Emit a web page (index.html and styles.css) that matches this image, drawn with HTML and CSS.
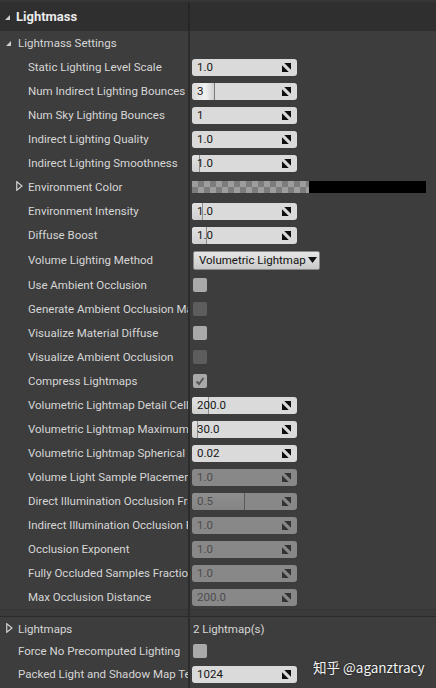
FILE: index.html
```html
<!DOCTYPE html>
<html>
<head>
<meta charset="utf-8">
<link rel="stylesheet" href="styles.css">
</head>
<body>
<div class="panel">
  <div class="row cat">
    <div class="lbl l0"><span class="tri-open"></span>Lightmass</div>
    <div class="val"></div>
  </div>

  <div class="row">
    <div class="lbl l1"><span class="tri-open small"></span>Lightmass Settings</div>
    <div class="val"></div>
  </div>

  <div class="row"><div class="lbl">Static Lighting Level Scale</div><div class="val"><div class="num"><span class="t">1.0</span><svg class="spin" viewBox="0 0 10 10"><polygon points="2.5,0 10,0 10,7.5"/><polygon points="0,2.5 7.5,10 0,10"/></svg></div></div></div>
  <div class="row"><div class="lbl">Num Indirect Lighting Bounces</div><div class="val"><div class="num"><div class="fill knob" style="width:22px"></div><span class="t">3</span><svg class="spin" viewBox="0 0 10 10"><polygon points="2.5,0 10,0 10,7.5"/><polygon points="0,2.5 7.5,10 0,10"/></svg></div></div></div>
  <div class="row"><div class="lbl">Num Sky Lighting Bounces</div><div class="val"><div class="num"><span class="t">1</span><svg class="spin" viewBox="0 0 10 10"><polygon points="2.5,0 10,0 10,7.5"/><polygon points="0,2.5 7.5,10 0,10"/></svg></div></div></div>
  <div class="row"><div class="lbl">Indirect Lighting Quality</div><div class="val"><div class="num"><span class="t">1.0</span><svg class="spin" viewBox="0 0 10 10"><polygon points="2.5,0 10,0 10,7.5"/><polygon points="0,2.5 7.5,10 0,10"/></svg></div></div></div>
  <div class="row"><div class="lbl">Indirect Lighting Smoothness</div><div class="val"><div class="num"><div class="fill" style="width:7px"></div><span class="t">1.0</span><svg class="spin" viewBox="0 0 10 10"><polygon points="2.5,0 10,0 10,7.5"/><polygon points="0,2.5 7.5,10 0,10"/></svg></div></div></div>
  <div class="row"><div class="lbl l-tri"><svg class="tri-closed" viewBox="0 0 7 10"><polygon points="0.75,0.75 6,5 0.75,9.25"/></svg>Environment Color</div><div class="val"><div class="color"><div class="checker"></div><div class="black"></div></div></div></div>
  <div class="row"><div class="lbl">Environment Intensity</div><div class="val"><div class="num"><div class="fill" style="width:10px"></div><span class="t">1.0</span><svg class="spin" viewBox="0 0 10 10"><polygon points="2.5,0 10,0 10,7.5"/><polygon points="0,2.5 7.5,10 0,10"/></svg></div></div></div>
  <div class="row"><div class="lbl">Diffuse Boost</div><div class="val"><div class="num"><div class="fill" style="width:14px"></div><span class="t">1.0</span><svg class="spin" viewBox="0 0 10 10"><polygon points="2.5,0 10,0 10,7.5"/><polygon points="0,2.5 7.5,10 0,10"/></svg></div></div></div>
  <div class="row tall"><div class="lbl">Volume Lighting Method</div><div class="val"><div class="combo"><span>Volumetric Lightmap</span><svg class="arrow" viewBox="0 0 9 6"><polygon points="0,0 9,0 4.5,6"/></svg></div></div></div>
  <div class="row"><div class="lbl">Use Ambient Occlusion</div><div class="val"><div class="check on"></div></div></div>
  <div class="row"><div class="lbl">Generate Ambient Occlusion Material</div><div class="val"><div class="check off"></div></div></div>
  <div class="row"><div class="lbl">Visualize Material Diffuse</div><div class="val"><div class="check on"></div></div></div>
  <div class="row"><div class="lbl">Visualize Ambient Occlusion</div><div class="val"><div class="check off"></div></div></div>
  <div class="row"><div class="lbl">Compress Lightmaps</div><div class="val"><div class="check on"><svg viewBox="0 0 14 14"><polyline points="3.5,7.5 6,10 10.5,4" /></svg></div></div></div>
  <div class="row"><div class="lbl">Volumetric Lightmap Detail Cell Size</div><div class="val"><div class="num"><div class="fill" style="width:16px"></div><span class="t">200.0</span><svg class="spin" viewBox="0 0 10 10"><polygon points="2.5,0 10,0 10,7.5"/><polygon points="0,2.5 7.5,10 0,10"/></svg></div></div></div>
  <div class="row"><div class="lbl">Volumetric Lightmap Maximum Brick Memory Mb</div><div class="val"><div class="num"><div class="fill" style="width:5px"></div><span class="t">30.0</span><svg class="spin" viewBox="0 0 10 10"><polygon points="2.5,0 10,0 10,7.5"/><polygon points="0,2.5 7.5,10 0,10"/></svg></div></div></div>
  <div class="row"><div class="lbl">Volumetric Lightmap Spherical Harmonic Smoothing</div><div class="val"><div class="num"><span class="t">0.02</span><svg class="spin" viewBox="0 0 10 10"><polygon points="2.5,0 10,0 10,7.5"/><polygon points="0,2.5 7.5,10 0,10"/></svg></div></div></div>
  <div class="row"><div class="lbl">Volume Light Sample Placement Scale</div><div class="val"><div class="num dis"><span class="t">1.0</span><svg class="spin" viewBox="0 0 10 10"><polygon points="2.5,0 10,0 10,7.5"/><polygon points="0,2.5 7.5,10 0,10"/></svg></div></div></div>
  <div class="row"><div class="lbl">Direct Illumination Occlusion Fraction</div><div class="val"><div class="num dis"><div class="fill" style="width:52px"></div><span class="t">0.5</span><svg class="spin" viewBox="0 0 10 10"><polygon points="2.5,0 10,0 10,7.5"/><polygon points="0,2.5 7.5,10 0,10"/></svg></div></div></div>
  <div class="row"><div class="lbl">Indirect Illumination Occlusion Fraction</div><div class="val"><div class="num dis"><span class="t">1.0</span><svg class="spin" viewBox="0 0 10 10"><polygon points="2.5,0 10,0 10,7.5"/><polygon points="0,2.5 7.5,10 0,10"/></svg></div></div></div>
  <div class="row"><div class="lbl">Occlusion Exponent</div><div class="val"><div class="num dis"><span class="t">1.0</span><svg class="spin" viewBox="0 0 10 10"><polygon points="2.5,0 10,0 10,7.5"/><polygon points="0,2.5 7.5,10 0,10"/></svg></div></div></div>
  <div class="row"><div class="lbl">Fully Occluded Samples Fraction</div><div class="val"><div class="num dis"><span class="t">1.0</span><svg class="spin" viewBox="0 0 10 10"><polygon points="2.5,0 10,0 10,7.5"/><polygon points="0,2.5 7.5,10 0,10"/></svg></div></div></div>
  <div class="row"><div class="lbl">Max Occlusion Distance</div><div class="val"><div class="num dis"><span class="t">200.0</span><svg class="spin" viewBox="0 0 10 10"><polygon points="2.5,0 10,0 10,7.5"/><polygon points="0,2.5 7.5,10 0,10"/></svg></div></div></div>

  <div class="sep"><div class="lbl"></div><div class="val"></div></div>

  <div class="row"><div class="lbl l1"><svg class="tri-closed" viewBox="0 0 7 10"><polygon points="0.75,0.75 6,5 0.75,9.25"/></svg>Lightmaps</div><div class="val"><span class="plain">2 Lightmap(s)</span></div></div>
  <div class="row short"><div class="lbl l1b">Force No Precomputed Lighting</div><div class="val"><div class="check on"></div></div></div>
  <div class="row last"><div class="lbl l1b">Packed Light and Shadow Map Texture Size</div><div class="val"><div class="num"><span class="t">1024</span><svg class="spin" viewBox="0 0 10 10"><polygon points="2.5,0 10,0 10,7.5"/><polygon points="0,2.5 7.5,10 0,10"/></svg></div></div></div>
  <div class="rest"><div class="lbl"></div><div class="val"></div></div>

  <div class="watermark">知乎 @aganztracy</div>
</div>
</body>
</html>
```
FILE: styles.css
```css
html, body {
  margin: 0;
  padding: 0;
  background: #3d3d3d;
}
.panel {
  position: relative;
  width: 436px;
  height: 688px;
  overflow: hidden;
  background: #3d3d3d;
  font-family: Roboto, "Noto Sans", sans-serif;
  font-size: 11.5px;
  color: #d6d6d6;
  display: flex;
  flex-direction: column;
}
.row {
  display: flex;
  height: 24px;
  flex: none;
}
.row.tall { height: 26px; }
.row.short { height: 19px; }
.row.last { height: 28px; }
.lbl {
  width: 190px;
  flex: none;
  box-sizing: border-box;
  border-right: 2px solid #2c2c2c;
  padding-left: 28px;
  display: flex;
  align-items: center;
  white-space: nowrap;
  overflow: hidden;
}
.lbl.l0 { padding-left: 16px; }
.lbl.l1 { padding-left: 18px; }
.lbl.l1b { padding-left: 18px; }
.val {
  flex: 1;
  display: flex;
  align-items: center;
  padding-left: 2px;
}
.cat {
  height: 31px;
  background: #2f2f2f;
  border-top: 2px solid #363636;
  box-sizing: border-box;
}
.cat .lbl {
  font-weight: bold;
  font-size: 13px;
  color: #ebebeb;
  border-right-color: #262626;
}
.l0, .l1, .l-tri { position: relative; }
.tri-open {
  position: absolute;
  left: 5px;
  top: 50%;
  margin-top: -2px;
  width: 0;
  height: 0;
  border-left: 5px solid transparent;
  border-bottom: 5px solid #cfcfcf;
}
.tri-open.small { left: 6px; }
.tri-closed {
  position: absolute;
  left: 6px;
  top: 50%;
  margin-top: -6px;
  width: 7px;
  height: 10px;
  fill: none;
  stroke: #d0d0d0;
  stroke-width: 1.2;
}
.l-tri .tri-closed { left: 16px; }
.num {
  position: relative;
  width: 105px;
  height: 17px;
  box-sizing: border-box;
  border-radius: 3px;
  background: #dadada;
  display: flex;
  align-items: center;
  padding-left: 5px;
  color: #161616;
  overflow: hidden;
}
.num .t { position: relative; }
.num .fill {
  position: absolute;
  left: 0;
  top: 0;
  bottom: 0;
  border-right: 1px solid #8e8e8e;
  background: linear-gradient(#e2e2e2, #cfcfcf);
}
.num .fill.knob {
  background: linear-gradient(90deg, #d8d8d8, #f2f2f2 60%, #cfcfcf);
  border-right: 1px solid #7a7a7a;
  border-radius: 3px 0 0 3px;
}
.spin {
  position: relative;
  margin-left: auto;
  margin-right: 6px;
  width: 9px;
  height: 9px;
  fill: #0e0e0e;
}
.num.dis {
  background: #888888;
  color: #4d4d4d;
}
.num.dis .spin { fill: #333333; }
.num.dis .fill {
  background: linear-gradient(#8e8e8e, #848484);
  border-right-color: #5a5a5a;
}
.color {
  display: flex;
  height: 12px;
  width: 234px;
}
.checker {
  width: 117px;
  background-color: #9d9d9d;
  background-image:
    linear-gradient(45deg, #7c7c7c 25%, transparent 25%, transparent 75%, #7c7c7c 75%),
    linear-gradient(45deg, #7c7c7c 25%, transparent 25%, transparent 75%, #7c7c7c 75%);
  background-size: 12px 12px;
  background-position: 0 0, 6px 6px;
}
.black {
  flex: 1;
  background: #000;
}
.combo {
  width: 127px;
  height: 19px;
  box-sizing: border-box;
  margin-left: 1px;
  border-radius: 2px;
  background: linear-gradient(#e6e6e6, #c9c9c9);
  border: 1px solid #8a8a8a;
  display: flex;
  align-items: center;
  padding-left: 5px;
  color: #111;
}
.combo .arrow {
  width: 9px;
  height: 6px;
  margin-left: 2px;
  fill: #111;
}
.check {
  width: 14px;
  height: 14px;
  margin-left: 1px;
  border-radius: 2px;
  box-sizing: border-box;
}
.check.on { background: #a9a9a9; }
.check.off { background: #5d5d5d; }
.check svg {
  display: block;
  width: 14px;
  height: 14px;
  fill: none;
  stroke: #565656;
  stroke-width: 2;
}
.sep {
  display: flex;
  height: 8px;
  flex: none;
  border-bottom: 1px solid #2a2a2a;
  border-top: 1px solid #343434;
  box-sizing: border-box;
  background: #3a3a3a;
}
.sep .lbl { padding: 0; }
.rest {
  display: flex;
  flex: 1;
}
.rest .lbl { padding: 0; }
.plain {
  padding-left: 1px;
  color: #d6d6d6;
}
.watermark {
  position: absolute;
  left: 313px;
  top: 657px;
  font-family: "Noto Sans CJK SC", "Noto Sans", sans-serif;
  font-size: 13.5px;
  color: #f4f4f4;
  text-shadow: 0 0 2px rgba(0,0,0,0.6);
  white-space: nowrap;
}
```
